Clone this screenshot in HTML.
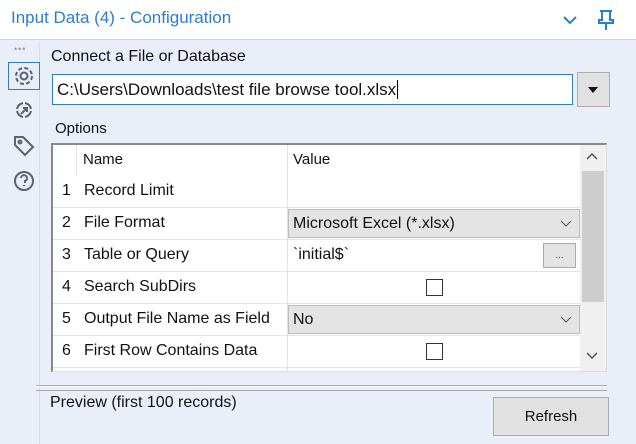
<!DOCTYPE html>
<html><head><style>
*{box-sizing:border-box;margin:0;padding:0}
body{width:636px;height:444px;overflow:hidden;background:#e9eef8;font-family:"Liberation Sans",sans-serif;font-size:16px;color:#111;position:relative}
.a{position:absolute}
.hdr{left:0;top:0;width:636px;height:40px;background:#fff;border-bottom:1px solid #cfd4dc}
.side{left:0;top:41px;width:40px;height:403px;border-right:1px solid #d8dde6}
.row{position:absolute;left:52px;width:528px;height:32px;border-bottom:1px solid #e3e3e3;background:#fff}
.row span{position:absolute;top:6px}
.n{left:9px}.nm{left:31px}
.vcol{position:absolute;left:234px;top:0;width:1px;height:100%;background:#e3e3e3}
.cb{position:absolute;left:373px;top:7px;width:17px;height:17px;border:1.5px solid #333;background:#fff}
.dd{position:absolute;left:235px;top:1px;width:292px;height:29px;background:#e4e4e4;border:1px solid #bcbcbc}
</style></head><body>
<div class="a hdr"></div>
<div class="a" style="left:11px;top:8px;font-size:17px;color:#2b7dd2">Input Data (4) - Configuration</div>
<svg class="a" style="left:560px;top:8px" width="60" height="24"><path d="M4 9l6 6 6-6" stroke="#2b7dd2" stroke-width="2" fill="none"/><path d="M40 3h12M42 3v9h-3v3h14v-3h-3V3M46 15v7" stroke="#2b7dd2" stroke-width="2" fill="none"/></svg>
<div class="a side"></div>
<div class="a" style="left:14px;top:44px;color:#999;font-size:9px;letter-spacing:1px">•••</div>
<div class="a" style="left:8px;top:62px;width:32px;height:28px;border:1.5px solid #2b7dd2"></div>
<svg class="a" style="left:8px;top:62px" width="32" height="140" fill="none" stroke="#5a6270" stroke-width="2">
<circle cx="16" cy="14" r="3.5"/><circle cx="16" cy="14" r="8" stroke-dasharray="4 2.3"/>
<path d="M9 47a8 8 0 0 1 6-6M17 41a8 8 0 0 1 6 6M23 49a8 8 0 0 1-6 6M15 55a8 8 0 0 1-6-6M13 52l6-6M15 46h4v4"/>
<path d="M7 75v8l10 10 8-8-10-10z"/><circle cx="12" cy="80" r="1.5"/>
<circle cx="16" cy="119" r="9"/><path d="M13 116a3 3 0 1 1 4 3v2M16 123v1"/>
</svg>
<div class="a" style="left:51px;top:48px;font-size:16px">Connect a File or Database</div>
<div class="a" style="left:52px;top:74px;width:521px;height:31px;background:#fff;border:1px solid #2b7dd2;padding:5px 4px;font-size:17px;white-space:nowrap">C:\Users\Downloads\test file browse tool.xlsx<span style="border-left:1px solid #000;margin-left:1px"></span></div>
<div class="a" style="left:577px;top:72px;width:33px;height:35px;background:#e1e1e1;border:1px solid #adadad"></div>
<svg class="a" style="left:587px;top:86px" width="12" height="8"><path d="M1 1h10L6 7z" fill="#111"/></svg>
<div class="a" style="left:55px;top:120px;font-size:15px">Options</div>
<div class="a" style="left:51px;top:143px;width:556px;height:229px;background:#fff;border-top:2px solid #888;border-left:2px solid #888;border-right:1px solid #ddd;border-bottom:1px solid #ddd;overflow:hidden">
</div>
<div class="a" style="left:53px;top:145px;width:527px;height:226px;overflow:hidden">
<div class="row" style="left:0;top:0;height:31px;border-bottom:none"><div class="a" style="left:23px;top:0;width:1px;height:31px;background:#e3e3e3"></div><div class="vcol"></div><span style="left:30px;font-size:15px">Name</span><span style="left:240px;font-size:15px">Value</span></div>
<div class="row" style="left:0;top:31px"><div class="vcol"></div><span class="n">1</span><span class="nm">Record Limit</span></div>
<div class="row" style="left:0;top:63px"><div class="vcol"></div><span class="n">2</span><span class="nm">File Format</span><div class="dd"><span style="left:4px;top:5px">Microsoft Excel (*.xlsx)</span><svg style="position:absolute;right:7px;top:10px" width="12" height="8"><path d="M1 1l5 5 5-5" stroke="#555" fill="none"/></svg></div></div>
<div class="row" style="left:0;top:95px"><div class="vcol"></div><span class="n">3</span><span class="nm">Table or Query</span><span style="left:240px">`initial$`</span><div class="a" style="left:490px;top:3px;width:33px;height:25px;background:#e4e4e4;border:1px solid #aaa;font-size:10px;text-align:center;line-height:24px;color:#555">...</div></div>
<div class="row" style="left:0;top:127px"><div class="vcol"></div><span class="n">4</span><span class="nm">Search SubDirs</span><div class="cb"></div></div>
<div class="row" style="left:0;top:159px"><div class="vcol"></div><span class="n">5</span><span class="nm">Output File Name as Field</span><div class="dd"><span style="left:4px;top:5px">No</span><svg style="position:absolute;right:7px;top:10px" width="12" height="8"><path d="M1 1l5 5 5-5" stroke="#555" fill="none"/></svg></div></div>
<div class="row" style="left:0;top:191px"><div class="vcol"></div><span class="n">6</span><span class="nm">First Row Contains Data</span><div class="cb"></div></div>
<div class="row" style="left:0;top:223px"><div class="vcol"></div></div>
</div>
<div class="a" style="left:580px;top:145px;width:26px;height:226px;background:#f0f0f0"></div>
<div class="a" style="left:582px;top:171px;width:22px;height:131px;background:#cdcdcd"></div>
<svg class="a" style="left:586px;top:152px" width="12" height="210"><path d="M1 7l5-5 5 5" stroke="#555" stroke-width="1.5" fill="none"/><path d="M1 201l5 5 5-5" stroke="#555" stroke-width="1.5" fill="none"/></svg>
<div class="a" style="left:36px;top:385px;width:571px;height:2px;border-top:1px solid #aaa;border-bottom:1px solid #fff"></div>
<div class="a" style="left:36px;top:390px;width:571px;height:2px;border-top:1px solid #aaa"></div>
<div class="a" style="left:50px;top:394px;font-size:16px">Preview (first 100 records)</div>
<div class="a" style="left:493px;top:397px;width:116px;height:39px;background:#e1e1e1;border:1px solid #adadad;text-align:center;line-height:37px;font-size:15px">Refresh</div>
</body></html>
